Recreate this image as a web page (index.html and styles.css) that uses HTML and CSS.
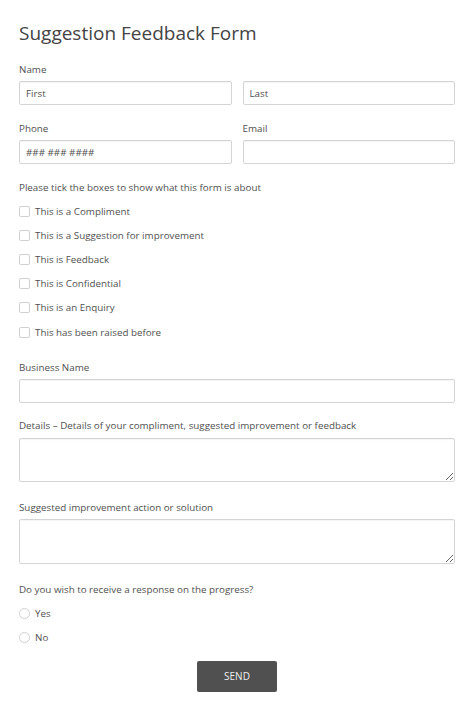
FILE: index.html
```html
<!DOCTYPE html>
<html lang="en">
<head>
    <meta charset="UTF-8">
    <title>Suggestion Feedback Form</title>
    <link rel="stylesheet" href="styles.css">
</head>
<body>

<form class="form">
    <h1>Suggestion Feedback Form</h1>

    <div class="field">
        <label class="label">Name</label>
        <div class="row">
            <input type="text" class="text" placeholder="First">
            <input type="text" class="text" placeholder="Last">
        </div>
    </div>

    <div class="field">
        <div class="row">
            <div class="col">
                <label class="label">Phone</label>
                <input type="text" class="text" placeholder="### ### ####">
            </div>
            <div class="col">
                <label class="label">Email</label>
                <input type="text" class="text">
            </div>
        </div>
    </div>

    <div class="field">
        <label class="label">Please tick the boxes to show what this form is about</label>
        <ul class="options">
            <li><span class="box"></span>This is a Compliment</li>
            <li><span class="box"></span>This is a Suggestion for improvement</li>
            <li><span class="box"></span>This is Feedback</li>
            <li><span class="box"></span>This is Confidential</li>
            <li><span class="box"></span>This is an Enquiry</li>
            <li><span class="box"></span>This has been raised before</li>
        </ul>
    </div>

    <div class="field biz">
        <label class="label">Business Name</label>
        <input type="text" class="text">
    </div>

    <div class="field big">
        <label class="label">Details &ndash; Details of your compliment, suggested improvement or feedback</label>
        <textarea class="area"></textarea>
    </div>

    <div class="field big">
        <label class="label">Suggested improvement action or solution</label>
        <textarea class="area tall"></textarea>
    </div>

    <div class="field last">
        <label class="label">Do you wish to receive a response on the progress?</label>
        <ul class="options">
            <li><span class="box round"></span>Yes</li>
            <li><span class="box round"></span>No</li>
        </ul>
    </div>

    <div class="actions">
        <button type="button" class="btn-send">SEND</button>
    </div>
</form>

</body>
</html>
```

FILE: styles.css
```css
body {
    margin: 0;
    background-color: #fff;
    font-family: 'Open Sans', 'Noto Sans', Arial, sans-serif;
    color: #555;
}

.form {
    padding: 21px 19px 0 19px;
}

h1 {
    margin: 0 0 18px 0;
    font-size: 19px;
    line-height: 24px;
    font-weight: 400;
    color: #444;
}

.field {
    margin-bottom: 17px;
}

.field.biz {
    margin-bottom: 16px;
}

.field.big {
    margin-bottom: 19px;
}

.label {
    display: block;
    font-size: 9.8px;
    line-height: 14px;
    margin-bottom: 4px;
    color: #505050;
}

.row {
    display: flex;
    gap: 11px;
}

.col {
    flex: 1;
}

.row .text {
    flex: 1;
    min-width: 0;
}

.text, .area {
    display: block;
    box-sizing: border-box;
    width: 100%;
    height: 24px;
    margin: 0;
    padding: 0 6px;
    border: 1px solid #d4d4d4;
    border-radius: 2px;
    box-shadow: inset 0 1px 1px rgba(0,0,0,0.04);
    font-family: inherit;
    font-size: 9.8px;
    color: #505050;
    background: #fff;
}

.text::placeholder {
    color: #505050;
}

.area {
    height: 44px;
    resize: vertical;
    margin-top: 5px;
}

.area.tall {
    height: 45px;
    margin-top: 4px;
}

.options {
    list-style: none;
    margin: 2px 0 0 0;
    padding: 0;
}

.options li {
    display: flex;
    align-items: center;
    height: 24.2px;
    font-size: 9.8px;
    color: #505050;
}

.box {
    box-sizing: border-box;
    width: 11px;
    height: 11px;
    margin-right: 5px;
    border: 1px solid #d0d0d0;
    border-radius: 2px;
    background: #fff;
}

.box.round {
    width: 11px;
    height: 11px;
    border-radius: 50%;
}

.field.biz {
    margin-top: 1px;
}

.field.last {
    margin-bottom: 11px;
}

.field.last .options {
    margin-top: 3px;
}

.actions {
    text-align: center;
}

.btn-send {
    width: 80px;
    height: 31px;
    border: none;
    border-radius: 2px;
    background-color: #505050;
    color: #eee;
    font-family: inherit;
    font-size: 10px;
    cursor: pointer;
}
```
